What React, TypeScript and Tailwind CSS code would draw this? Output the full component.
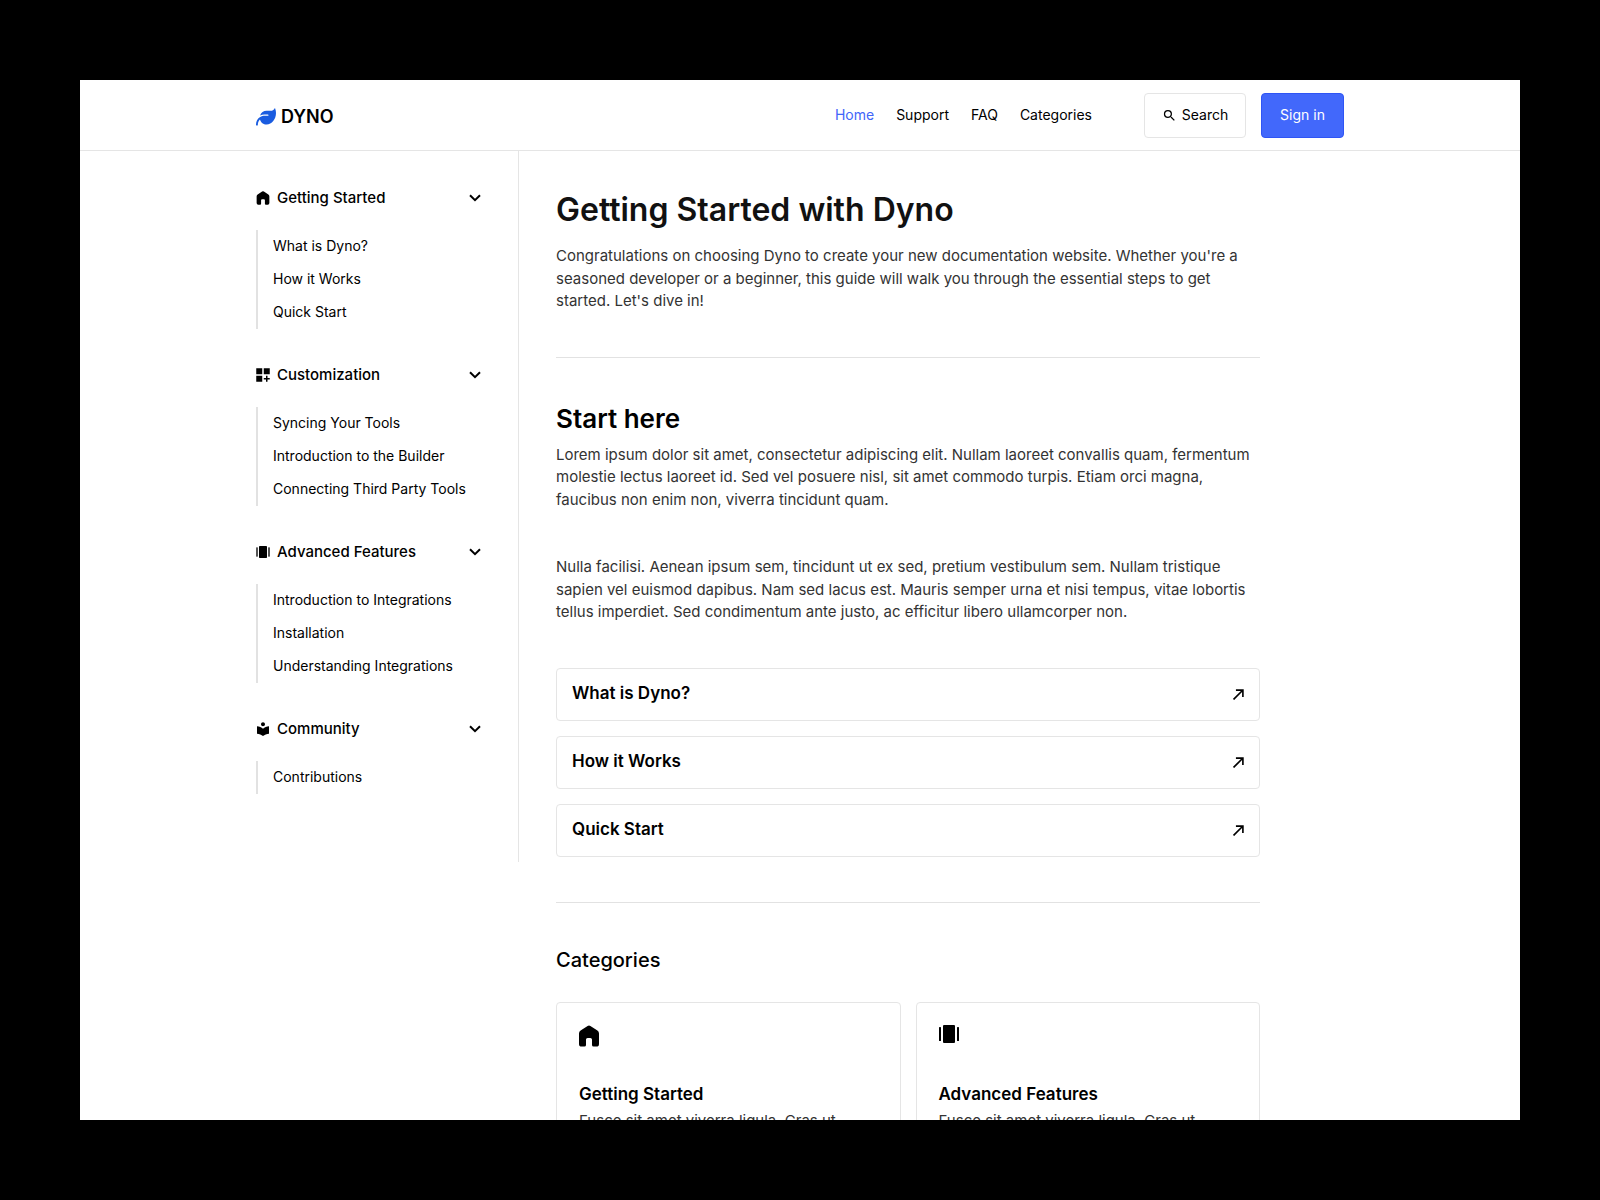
import { useState } from "react";
import type { ReactNode } from "react";
import { FaLeaf } from "react-icons/fa6";
import { MdDashboardCustomize, MdLocalLibrary, MdSearch } from "react-icons/md";

type Section = {
  title: string;
  icon: ReactNode;
  links: string[];
};

function HomeIcon({ className }: { className?: string }) {
  return (
    <svg viewBox="0 0 20 22" fill="currentColor" aria-hidden="true" className={className}>
      <path d="M8.6 0.9a2.4 2.4 0 0 1 2.8 0l7 4.7A3.4 3.4 0 0 1 20 8.5V19a2.6 2.6 0 0 1-2.6 2.6h-2.8A1.6 1.6 0 0 1 13 20v-5.5a1.6 1.6 0 0 0-1.6-1.6H8.6A1.6 1.6 0 0 0 7 14.5V20a1.6 1.6 0 0 1-1.6 1.6H2.6A2.6 2.6 0 0 1 0 19V8.5a3.4 3.4 0 0 1 1.6-2.9z" />
    </svg>
  );
}

function CarouselIcon({ className }: { className?: string }) {
  return (
    <svg viewBox="0 0 20 18" fill="currentColor" aria-hidden="true" className={className}>
      <rect x="0" y="2" width="2" height="14" rx="0.6" />
      <rect x="4" y="0" width="12" height="18" rx="1" />
      <rect x="18" y="2" width="2" height="14" rx="0.6" />
    </svg>
  );
}

function ChevronIcon() {
  return (
    <svg viewBox="0 0 12 8" fill="none" stroke="currentColor" strokeWidth="2" aria-hidden="true" className="h-2 w-3">
      <path d="M1 1.2l5 5 5-5" />
    </svg>
  );
}

function ArrowIcon() {
  return (
    <svg viewBox="0 0 12 12" fill="none" stroke="currentColor" strokeWidth="1.8" aria-hidden="true" className="size-[11px]">
      <path d="M0.6 11.4L10.6 1.4M3.2 1.2h7.6v7.6" />
    </svg>
  );
}

const navLinks = ["Home", "Support", "FAQ", "Categories"];

const sections: Section[] = [
  {
    title: "Getting Started",
    icon: <HomeIcon className="size-[14px]" />,
    links: ["What is Dyno?", "How it Works", "Quick Start"],
  },
  {
    title: "Customization",
    icon: <MdDashboardCustomize className="size-[18px] shrink-0" />,
    links: ["Syncing Your Tools", "Introduction to the Builder", "Connecting Third Party Tools"],
  },
  {
    title: "Advanced Features",
    icon: <CarouselIcon className="h-3 w-[14px]" />,
    links: ["Introduction to Integrations", "Installation", "Understanding Integrations"],
  },
  {
    title: "Community",
    icon: <MdLocalLibrary className="size-4 shrink-0" />,
    links: ["Contributions"],
  },
];

const guides = ["What is Dyno?", "How it Works", "Quick Start"];

const categories = [
  { title: "Getting Started", icon: <HomeIcon className="h-[22px] w-5" /> },
  { title: "Advanced Features", icon: <CarouselIcon className="h-[18px] w-5" /> },
];

function Header() {
  return (
    <header className="border-b border-[#e5e5e5]">
      <div className="mx-auto flex h-[70px] max-w-[1088px] items-center justify-between">
        <a href="#" className="flex items-center gap-[5px] pt-[3px] text-lg font-semibold">
          <FaLeaf className="size-5 text-[#1a5ce0]" />
          DYNO
        </a>
        <div className="flex items-center gap-[52px]">
          <nav className="flex gap-[22px] text-sm">
            {navLinks.map((link) => (
              <a key={link} href="#" className={link === "Home" ? "text-[#4165f9]" : ""}>
                {link}
              </a>
            ))}
          </nav>
          <div className="flex gap-[15px] text-sm">
            <button type="button" className="flex h-[45px] w-[102px] items-center justify-center gap-[5px] rounded border border-[#e5e5e5]">
              <MdSearch className="size-[15px]" />
              Search
            </button>
            <button type="button" className="h-[45px] w-[83px] rounded border border-[#2f55f5] bg-[#4268fb] text-white">
              Sign in
            </button>
          </div>
        </div>
      </div>
    </header>
  );
}

function SidebarSection({ title, icon, links }: Section) {
  const [open, setOpen] = useState(true);

  return (
    <section>
      <button
        type="button"
        aria-expanded={open}
        onClick={() => setOpen(!open)}
        className="flex h-6 w-full items-center justify-between text-[15px] font-medium"
      >
        <span className="flex items-center gap-[7px]">
          <span className="flex w-[14px] justify-center">{icon}</span>
          {title}
        </span>
        <ChevronIcon />
      </button>
      {open && (
        <ul className="mt-5 border-l-2 border-[#e2e2e2] pl-[15px] text-sm">
          {links.map((link) => (
            <li key={link}>
              <a href="#" className="block pb-0.5 leading-[31px]">
                {link}
              </a>
            </li>
          ))}
        </ul>
      )}
    </section>
  );
}

function Sidebar() {
  return (
    <aside className="flex w-[263px] shrink-0 flex-col gap-[34px] self-start border-r border-[#e5e5e5] pt-[35px] pr-[37px] pb-[68px]">
      {sections.map((section) => (
        <SidebarSection key={section.title} {...section} />
      ))}
    </aside>
  );
}

function Content() {
  return (
    <main className="w-full max-w-[704px] pt-9">
      <h1 className="text-[32px] leading-[45px] font-semibold text-[#111]">Getting Started with Dyno</h1>
      <p className="mt-[13px] text-[15px] leading-normal text-[#333]">
        Congratulations on choosing Dyno to create your new documentation website. Whether you're a seasoned developer
        or a beginner, this guide will walk you through the essential steps to get started. Let's dive in!
      </p>
      <hr className="mt-11 border-[#e2e2e2]" />

      <h2 className="mt-[45px] text-[26px] leading-8 font-semibold">Start here</h2>
      <p className="mt-[9px] text-[15px] leading-normal text-[#333]">
        Lorem ipsum dolor sit amet, consectetur adipiscing elit. Nullam laoreet convallis quam, fermentum molestie
        lectus laoreet id. Sed vel posuere nisl, sit amet commodo turpis. Etiam orci magna, faucibus non enim non,
        viverra tincidunt quam.
      </p>
      <p className="mt-[45px] text-[15px] leading-normal text-[#333]">
        Nulla facilisi. Aenean ipsum sem, tincidunt ut ex sed, pretium vestibulum sem. Nullam tristique sapien vel
        euismod dapibus. Nam sed lacus est. Mauris semper urna et nisi tempus, vitae lobortis tellus imperdiet. Sed
        condimentum ante justo, ac efficitur libero ullamcorper non.
      </p>

      <div className="mt-11 flex flex-col gap-[15px]">
        {guides.map((guide) => (
          <a
            key={guide}
            href="#"
            className="flex h-[53px] items-center justify-between rounded border border-[#e5e5e5] px-[15px] text-[17px] font-semibold"
          >
            {guide}
            <ArrowIcon />
          </a>
        ))}
      </div>
      <hr className="mt-[45px] border-[#e2e2e2]" />

      <h2 className="mt-[45px] text-xl leading-6 font-medium">Categories</h2>
      <div className="mt-[30px] grid grid-cols-2 gap-[15px]">
        {categories.map(({ title, icon }) => (
          <a key={title} href="#" className="rounded border border-[#e5e5e5] p-[22px]">
            <div className="h-[57px]">{icon}</div>
            <h3 className="text-[17px] leading-6 font-semibold">{title}</h3>
            <p className="mt-1 text-[15px] leading-normal text-[#333]">Fusce sit amet viverra ligula. Cras ut</p>
          </a>
        ))}
      </div>
    </main>
  );
}

export default function App() {
  return (
    <div className="h-screen bg-black p-20 font-['Inter',sans-serif] text-black">
      <div className="h-full overflow-hidden bg-white">
        <Header />
        <div className="mx-auto flex max-w-[1088px] gap-[37px]">
          <Sidebar />
          <Content />
        </div>
      </div>
    </div>
  );
}
